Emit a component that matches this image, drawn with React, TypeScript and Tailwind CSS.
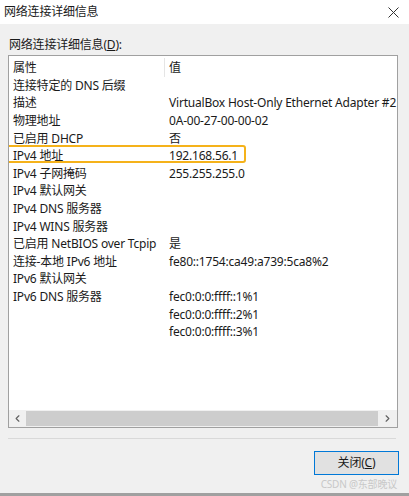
import { ChevronLeft, ChevronRight } from 'lucide-react'

const rows: [string, string][] = [
  ['连接特定的 DNS 后缀', ''],
  ['描述', 'VirtualBox Host-Only Ethernet Adapter #2'],
  ['物理地址', '0A-00-27-00-00-02'],
  ['已启用 DHCP', '否'],
  ['IPv4 地址', '192.168.56.1'],
  ['IPv4 子网掩码', '255.255.255.0'],
  ['IPv4 默认网关', ''],
  ['IPv4 DNS 服务器', ''],
  ['IPv4 WINS 服务器', ''],
  ['已启用 NetBIOS over Tcpip', '是'],
  ['连接-本地 IPv6 地址', 'fe80::1754:ca49:a739:5ca8%2'],
  ['IPv6 默认网关', ''],
  ['IPv6 DNS 服务器', 'fec0:0:0:ffff::1%1'],
  ['', 'fec0:0:0:ffff::2%1'],
  ['', 'fec0:0:0:ffff::3%1'],
]

export default function App() {
  return (
    <div
      className="w-[409px] h-[496px] flex flex-col bg-[#f0f0f0] text-[12px] text-[#1a1a1a] overflow-hidden tracking-[-0.2px]"
      style={{ fontFamily: '"Noto Sans", "Noto Sans CJK SC", sans-serif' }}
    >
      {/* title bar */}
      <div className="h-[24px] bg-white flex items-center justify-between pl-[4px] pr-[10px]">
        <span className="text-[12px] leading-none">网络连接详细信息</span>
        <svg width="11" height="11" viewBox="0 0 11 11" className="text-[#333]">
          <path d="M0.5 0.5 L10.5 10.5 M10.5 0.5 L0.5 10.5" stroke="currentColor" strokeWidth="1" />
        </svg>
      </div>

      <div className="flex-1 flex flex-col px-[8px] pt-[13px]">
        <div className="leading-[16px] pl-[1px] mb-[2px]">
          网络连接详细信息(<span className="underline">D</span>):
        </div>

        {/* list view */}
        <div className="w-[390px] h-[373px] border border-[#a0a0a0] bg-white flex flex-col">
          <div className="flex-1 relative pt-[2px] overflow-hidden">
            <div className="flex h-[19px] items-center">
              <div className="w-[156px] shrink-0 pl-[4px] border-r border-[#e5e5e5] h-full flex items-center">属性</div>
              <div className="pl-[4px]">值</div>
            </div>
            {rows.map(([k, v], i) => (
              <div key={i} className="flex h-[17.6px] items-center whitespace-nowrap">
                <div className="w-[160px] shrink-0 pl-[4px]">{k}</div>
                <div>{v}</div>
              </div>
            ))}
            {/* highlight annotation */}
            <div className="absolute left-[-3px] top-[89px] w-[240px] h-[18px] border-2 border-[#f5b21a] rounded-[3px]" />
          </div>
          {/* horizontal scrollbar */}
          <div className="h-[17px] shrink-0 flex items-center bg-[#f0f0f0]">
            <div className="w-[17px] flex justify-center text-[#606060]">
              <ChevronLeft size={11} strokeWidth={2.5} />
            </div>
            <div className="flex-1 h-[15px] bg-[#cdcdcd]" />
            <div className="w-[19px] flex justify-center text-[#606060]">
              <ChevronRight size={11} strokeWidth={2.5} />
            </div>
          </div>
        </div>

        <div className="mt-[10px] h-px w-[388px] bg-[#d9d9d9]" />

        <div className="flex justify-end mt-[12px] pr-[2px]">
          <button className="w-[85px] h-[24px] border border-[#0078d7] bg-[#e1e1e1] text-[12px] leading-none">
            关闭(<span className="underline">C</span>)
          </button>
        </div>
        <div className="flex justify-end pr-[4px] mt-[2px] text-[10px] text-[#c8c8c8]">CSDN @东部晚议</div>
      </div>
      <div className="h-[3px] bg-[#a0a0a0]" />
    </div>
  )
}
